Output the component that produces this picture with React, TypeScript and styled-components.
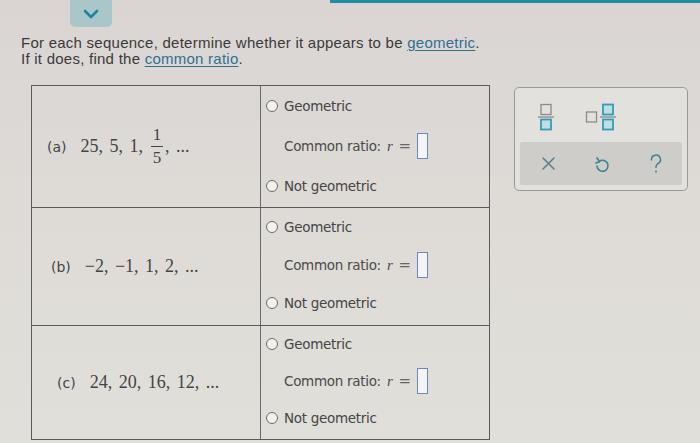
import React from 'react';
import styled, { createGlobalStyle } from 'styled-components';

const GlobalStyle = createGlobalStyle`
  html, body {
    margin: 0;
    padding: 0;
    background: #dcd8d5;
  }
  body {
    font-family: "Liberation Sans", Arial, sans-serif;
    color: #3f3f3f;
  }
`;

const Page = styled.div`
  position: relative;
  width: 700px;
  height: 443px;
  overflow: hidden;
  background: linear-gradient(180deg, #dad5d3 0%, #dedbd7 45%, #e1dfda 100%);
`;

const TopStrip = styled.div`
  display: flex;
  justify-content: space-between;
  align-items: flex-start;
  height: 27px;
  padding-left: 70px;
`;

const Tab = styled.div`
  width: 42px;
  height: 27px;
  background: #a9c6c9;
  border-radius: 0 0 5px 5px;
  display: flex;
  align-items: center;
  justify-content: center;
`;

const AccentBar = styled.div`
  width: 370px;
  height: 3px;
  background: #1f8ea3;
`;

const Prompt = styled.p`
  margin: 8px 0 0 21px;
  font-size: 15px;
  line-height: 16px;
  letter-spacing: 0.25px;
  color: #3a3a3a;
`;

const Term = styled.span`
  color: #2f6f90;
  text-decoration: underline;
  text-underline-offset: 2px;
`;

const Body = styled.div`
  display: flex;
  align-items: flex-start;
  margin-top: 18px;
  padding-left: 31px;
  gap: 24px;
`;

const Table = styled.div`
  width: 457px;
  border: 1.5px solid #5a5a5a;
  display: flex;
  flex-direction: column;
`;

const Row = styled.div<{ $h: number; $last?: boolean }>`
  display: grid;
  grid-template-columns: 229px 1fr;
  height: ${p => p.$h}px;
  border-bottom: ${p => (p.$last ? 'none' : '1.5px solid #5a5a5a')};
`;

const SeqCell = styled.div<{ $indent: number }>`
  display: flex;
  align-items: center;
  padding-left: ${p => p.$indent}px;
  border-right: 1.5px solid #6a6a6a;
`;

const Label = styled.span`
  font-family: "DejaVu Sans", "Liberation Sans", sans-serif;
  font-size: 14px;
  color: #444;
  margin-right: 14px;
`;

const Seq = styled.span`
  font-family: "Liberation Serif", "Times New Roman", serif;
  font-size: 18px;
  word-spacing: 2px;
  color: #444;
  display: inline-flex;
  align-items: center;
`;

const Frac = styled.span`
  display: inline-flex;
  flex-direction: column;
  align-items: center;
  font-size: 17px;
  line-height: 16px;
  margin: 0 2px 0 8px;
`;

const FracBar = styled.span`
  width: 12px;
  height: 1px;
  background: #444;
  margin: 3px 0;
`;

const ChoiceCell = styled.div<{ $pad: number; $gap: number }>`
  display: flex;
  flex-direction: column;
  padding: ${p => p.$pad}px 0 0 5px;
  gap: ${p => p.$gap}px;
`;

const Choice = styled.div`
  display: flex;
  align-items: center;
  height: 20px;
  font-family: "DejaVu Sans", "Liberation Sans", sans-serif;
  font-size: 13.5px;
  letter-spacing: -0.3px;
  color: #454545;
`;

const Radio = styled.span`
  width: 12px;
  height: 12px;
  border: 1px solid #6c6c6c;
  border-radius: 50%;
  background: #f2f1ee;
  margin-right: 6px;
  box-sizing: border-box;
`;

const Ratio = styled.div`
  display: flex;
  align-items: center;
  height: 20px;
  padding-left: 18px;
  font-family: "DejaVu Sans", "Liberation Sans", sans-serif;
  font-size: 13.5px;
  letter-spacing: -0.3px;
  color: #4a4a4a;
`;

const Var = styled.span`
  font-family: "Liberation Serif", "Times New Roman", serif;
  font-style: italic;
  font-size: 15px;
  margin: 0 6px 0 6px;
`;

const Eq = styled.span`
  font-size: 15px;
  color: #666;
  margin-right: 6px;
`;

const AnswerBox = styled.span`
  width: 9px;
  height: 24px;
  border: 1px solid #6d86c9;
  background: #f4f4f2;
`;

const Keypad = styled.div`
  margin-top: 2px;
  width: 174px;
  height: 104px;
  border: 1px solid #9a9a9a;
  border-radius: 5px;
  background: #e3e1dd;
  display: flex;
  flex-direction: column;
  padding: 4px 5px 5px;
  box-sizing: border-box;
`;

const KeyRow = styled.div`
  display: flex;
  align-items: center;
  height: 50px;
  padding-left: 17px;
  gap: 30px;
`;

const ToolBar = styled.div`
  flex: 1;
  background: #cfcdca;
  border-radius: 2px;
  display: flex;
  align-items: center;
  justify-content: space-between;
  padding: 0 14px 0 16px;
`;

const ToolIcon = styled.span`
  display: flex;
  align-items: center;
  justify-content: center;
  width: 24px;
  height: 24px;
`;

const Chevron = () => (
  <svg width="16" height="10" viewBox="0 0 16 10">
    <path d="M2 2 L8 8 L14 2" fill="none" stroke="#1b879e" strokeWidth="2.6" strokeLinecap="round" strokeLinejoin="round" />
  </svg>
);

const FracIcon = () => (
  <svg width="18" height="28" viewBox="0 0 18 28">
    <rect x="4" y="1.5" width="10" height="10" fill="none" stroke="#8a8a8a" strokeWidth="1.3" />
    <line x1="1" y1="14" x2="17" y2="14" stroke="#8a8a8a" strokeWidth="1.3" />
    <rect x="4" y="16.5" width="10" height="10" fill="#bfdde2" stroke="#2f9fb5" strokeWidth="1.8" />
  </svg>
);

const MixedIcon = () => (
  <svg width="32" height="28" viewBox="0 0 32 28">
    <rect x="1.5" y="9" width="10" height="10" fill="none" stroke="#8a8a8a" strokeWidth="1.3" />
    <rect x="18" y="1.5" width="10" height="10" fill="#bfdde2" stroke="#2f9fb5" strokeWidth="1.8" />
    <line x1="15" y1="14" x2="31" y2="14" stroke="#8a8a8a" strokeWidth="1.3" />
    <rect x="18" y="16.5" width="10" height="10" fill="#bfdde2" stroke="#2f9fb5" strokeWidth="1.8" />
  </svg>
);

const XIcon = () => (
  <svg width="15" height="15" viewBox="0 0 15 15">
    <path d="M2 2 L13 13 M13 2 L2 13" stroke="#557f8c" strokeWidth="1.5" strokeLinecap="round" />
  </svg>
);

const UndoIcon = () => (
  <svg width="16" height="18" viewBox="0 0 16 18">
    <path d="M5 6.5 A5.5 5.5 0 1 1 3 11" fill="none" stroke="#3f8496" strokeWidth="1.7" strokeLinecap="round" />
    <path d="M3 3 L5.5 6.8 L1.8 8" fill="none" stroke="#3f8496" strokeWidth="1.7" strokeLinecap="round" strokeLinejoin="round" />
  </svg>
);

const HelpIcon = () => (
  <svg width="14" height="20" viewBox="0 0 14 20">
    <path d="M2.5 6 A4.5 4.5 0 1 1 8.5 9.8 C7 10.7 7 11.5 7 13.5" fill="none" stroke="#3f8496" strokeWidth="1.5" strokeLinecap="round" />
    <circle cx="7" cy="17.5" r="1" fill="#3f8496" />
  </svg>
);

type Item = {
  label: string;
  seq: React.ReactNode;
  h: number;
  pad: number;
  gap: number;
  indent: number;
};

const items: Item[] = [
  {
    label: '(a)',
    seq: (
      <>
        25, 5, 1,
        <Frac>
          <span>1</span>
          <FracBar />
          <span>5</span>
        </Frac>
        , ...
      </>
    ),
    h: 121,
    pad: 10,
    gap: 20,
    indent: 15,
  },
  { label: '(b)', seq: <>−2, −1, 1, 2, ...</>, h: 117, pad: 9, gap: 18, indent: 19 },
  { label: '(c)', seq: <>24, 20, 16, 12, ...</>, h: 113, pad: 8, gap: 17, indent: 25 },
];

export default function App() {
  return (
    <Page>
      <GlobalStyle />
      <TopStrip>
        <Tab>
          <Chevron />
        </Tab>
        <AccentBar />
      </TopStrip>
      <Prompt>
        For each sequence, determine whether it appears to be <Term>geometric</Term>.
        <br />
        If it does, find the <Term>common ratio</Term>.
      </Prompt>
      <Body>
        <Table>
          {items.map((it, i) => (
            <Row key={it.label} $h={it.h} $last={i === items.length - 1}>
              <SeqCell $indent={it.indent}>
                <Label>{it.label}</Label>
                <Seq>{it.seq}</Seq>
              </SeqCell>
              <ChoiceCell $pad={it.pad} $gap={it.gap}>
                <Choice>
                  <Radio />
                  Geometric
                </Choice>
                <Ratio>
                  Common ratio:
                  <Var>r</Var>
                  <Eq>=</Eq>
                  <AnswerBox />
                </Ratio>
                <Choice>
                  <Radio />
                  Not geometric
                </Choice>
              </ChoiceCell>
            </Row>
          ))}
        </Table>
        <Keypad>
          <KeyRow>
            <FracIcon />
            <MixedIcon />
          </KeyRow>
          <ToolBar>
            <ToolIcon><XIcon /></ToolIcon>
            <ToolIcon><UndoIcon /></ToolIcon>
            <ToolIcon><HelpIcon /></ToolIcon>
          </ToolBar>
        </Keypad>
      </Body>
    </Page>
  );
}
